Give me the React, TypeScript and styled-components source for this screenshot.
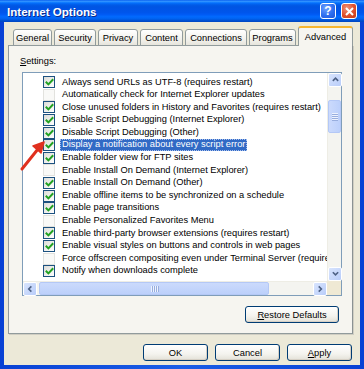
import React from "react";
import styled, { createGlobalStyle } from "styled-components";

const Global = createGlobalStyle`
  html, body { margin: 0; padding: 0; background: #ffffff; }
  body { font-family: "Liberation Sans", Arial, sans-serif; }
  * { box-sizing: border-box; }
`;

const Window = styled.div`
  position: relative;
  width: 364px;
  height: 369px;
  display: flex;
  flex-direction: column;
  background: linear-gradient(to right, #0841d4, #1a5ee6 50%, #0841d4);
  overflow: hidden;
`;

const TitleBar = styled.div`
  height: 22px;
  flex: none;
  display: flex;
  align-items: center;
  padding: 0 7px 0 7px;
  background: linear-gradient(
    to bottom,
    #0058ee 0%,
    #3593ff 5%,
    #288eff 8%,
    #127dff 11%,
    #036ffc 14%,
    #0262ee 19%,
    #0057e5 26%,
    #0054e3 32%,
    #0055eb 56%,
    #005bf5 66%,
    #026afe 76%,
    #0062ef 86%,
    #0052d6 92%,
    #0046c0 100%
  );
`;

const Title = styled.div`
  flex: 1;
  color: #ffffff;
  font-weight: bold;
  font-size: 11.6px;
  letter-spacing: 0;
  text-shadow: 1px 1px 0 #0a2a8a;
`;

const CapButton = styled.div<{ $kind: "help" | "close" }>`
  width: 16px;
  height: 16px;
  margin-left: 5px;
  border: 1px solid #ffffff;
  border-radius: 3px;
  display: flex;
  align-items: center;
  justify-content: center;
  color: #ffffff;
  font-weight: bold;
  font-size: 12px;
  background: ${(p) =>
    p.$kind === "close"
      ? "radial-gradient(circle at 35% 30%, #f0937a, #e0502c 55%, #c33a18)"
      : "radial-gradient(circle at 35% 30%, #6ea2ff, #2f6ff0 55%, #1d55d8)"};
`;

const Client = styled.div`
  flex: 1;
  margin: 0 4px 4px 4px;
  background: #ece9d8;
  padding: 4px 7px 4px 4px;
  display: flex;
  flex-direction: column;
`;

const TabStrip = styled.div`
  height: 20px;
  display: flex;
  align-items: flex-end;
  gap: 2px;
  margin-left: 5px;
  margin-bottom: -1px;
  position: relative;
  z-index: 1;
`;

const Tab = styled.div<{ $w: number; $active?: boolean }>`
  width: ${(p) => p.$w}px;
  height: ${(p) => (p.$active ? 20 : 17)}px;
  display: flex;
  align-items: ${(p) => (p.$active ? "flex-start" : "center")};
  padding-top: ${(p) => (p.$active ? 4 : 0)}px;
  justify-content: center;
  font-size: 9.3px;
  color: #000000;
  white-space: nowrap;
  border: 1px solid #919b9c;
  border-bottom: ${(p) => (p.$active ? "none" : "1px solid #919b9c")};
  border-top: ${(p) => (p.$active ? "2px solid #f7b52f" : "1px solid #919b9c")};
  border-radius: 3px 3px 0 0;
  background: ${(p) =>
    p.$active ? "#f6f5f0" : "linear-gradient(to bottom, #ffffff, #f0efe9 70%, #e6e4dc)"};
  margin-right: ${(p) => (p.$active ? 0 : 0)}px;
`;

const Panel = styled.div`
  width: 345px;
  height: 289px;
  border: 1px solid #919b9c;
  border-right-color: #8a9293;
  background: #f6f5f0;
  padding: 9px 10px 0 13px;
  display: flex;
  flex-direction: column;
  box-shadow: 1px 1px 0 #d0cec3;
`;

const Label = styled.div`
  font-size: 9.3px;
  line-height: 12px;
  height: 12px;
  margin-left: -2px;
  color: #000;
`;

const U = styled.span`
  text-decoration: underline;
`;

const ListBox = styled.div`
  margin-top: 5px;
  width: 320px;
  height: 224px;
  border: 1px solid #7f9db9;
  background: #ffffff;
  display: grid;
  grid-template-columns: 304px 14px;
  grid-template-rows: 208px 14px;
`;

const Rows = styled.div`
  overflow: hidden;
  padding-top: 3px;
`;

const Row = styled.div`
  height: 12.6px;
  display: flex;
  align-items: center;
  padding-left: 20px;
  white-space: nowrap;
  font-size: 9.3px;
  color: #000;
`;

const Check = styled.div<{ $on: boolean }>`
  width: 12px;
  height: 12px;
  flex: none;
  margin-right: 5px;
  border: 1px solid ${(p) => (p.$on ? "#1c5180" : "#e2e2de")};
  background: ${(p) =>
    p.$on ? "linear-gradient(135deg, #dcdcd7, #ffffff)" : "#f9f9f7"};
  display: flex;
  align-items: center;
  justify-content: center;
`;

const RowText = styled.span<{ $sel?: boolean }>`
  padding: 0 2px;
  line-height: 11.6px;
  background: ${(p) => (p.$sel ? "#316ac5" : "transparent")};
  color: ${(p) => (p.$sel ? "#ffffff" : "#000000")};
  outline: ${(p) => (p.$sel ? "1px dotted #a8c0ee" : "none")};
  outline-offset: -1px;
`;

const VScroll = styled.div`
  background: #f4f4f0;
  display: flex;
  flex-direction: column;
  border-left: 1px solid #eeede5;
`;

const HScroll = styled.div`
  background: #f4f4f0;
  display: flex;
  align-items: stretch;
  border-top: 1px solid #eeede5;
`;

const Corner = styled.div`
  background: #efe9d4;
`;

const ScrollBtn = styled.div`
  width: 14px;
  height: 14px;
  flex: none;
  border: 1px solid #ffffff;
  border-radius: 2px;
  background: linear-gradient(135deg, #d8e4fd, #b9cdfa);
  display: flex;
  align-items: center;
  justify-content: center;
`;

const Track = styled.div<{ $dir: "v" | "h" }>`
  flex: 1;
  display: flex;
  flex-direction: ${(p) => (p.$dir === "v" ? "column" : "row")};
  padding: ${(p) => (p.$dir === "v" ? "13px 0 0 0" : "0 0 0 2px")};
`;

const Thumb = styled.div<{ $dir: "v" | "h"; $len: number }>`
  ${(p) => (p.$dir === "v" ? `height: ${p.$len}px;` : `width: ${p.$len}px;`)}
  flex: none;
  border: 1px solid #b4c8f6;
  border-radius: 2px;
  background: ${(p) =>
    p.$dir === "v"
      ? "linear-gradient(to right, #cbdafc, #bcd0fb)"
      : "linear-gradient(to bottom, #cbdafc, #bcd0fb)"};
  display: flex;
  flex-direction: ${(p) => (p.$dir === "v" ? "column" : "row")};
  align-items: center;
  justify-content: center;
  gap: 1px;
`;

const Grip = styled.div<{ $dir: "v" | "h" }>`
  ${(p) => (p.$dir === "v" ? "width: 6px; height: 1px;" : "width: 1px; height: 6px;")}
  background: #eef3fe;
  box-shadow: ${(p) => (p.$dir === "v" ? "0 1px 0 #98aede" : "1px 0 0 #98aede")};
`;

const RestoreRow = styled.div`
  display: flex;
  justify-content: flex-end;
  margin-top: 10px;
  padding-right: 3px;
`;

const Button = styled.div<{ $w: number }>`
  width: ${(p) => p.$w}px;
  height: 17px;
  border: 1px solid #003c74;
  border-radius: 3px;
  background: linear-gradient(to bottom, #ffffff, #f4f3ee 60%, #e3e1d8);
  box-shadow: inset -1px -1px 0 #d6d0c5;
  display: flex;
  align-items: center;
  justify-content: center;
  font-size: 9.3px;
  color: #000;
`;

const ButtonRow = styled.div`
  display: flex;
  justify-content: flex-end;
  gap: 7px;
  margin-top: 10px;
  padding-right: 1px;
`;

const ArrowOverlay = styled.svg`
  position: absolute;
  left: 0;
  top: 0;
  pointer-events: none;
`;

const Chevron = ({ d }: { d: "up" | "down" | "left" | "right" }) => {
  const paths: Record<string, string> = {
    up: "M1.5 5.5 L4.5 2.5 L7.5 5.5",
    down: "M1.5 2.5 L4.5 5.5 L7.5 2.5",
    left: "M5.5 1.5 L2.5 4.5 L5.5 7.5",
    right: "M2.5 1.5 L5.5 4.5 L2.5 7.5",
  };
  return (
    <svg width="9" height="8" viewBox="0 0 9 9">
      <path d={paths[d]} fill="none" stroke="#4d6185" strokeWidth="1.8" />
    </svg>
  );
};

const CheckMark = () => (
  <svg width="9" height="8" viewBox="0 0 9 8">
    <path d="M0.8 3.8 L3.4 6.4 L8.2 1.2" fill="none" stroke="#21a121" strokeWidth="2" />
  </svg>
);

const tabs: { label: string; w: number; active?: boolean }[] = [
  { label: "General", w: 39 },
  { label: "Security", w: 42 },
  { label: "Privacy", w: 40 },
  { label: "Content", w: 43 },
  { label: "Connections", w: 62 },
  { label: "Programs", w: 47 },
  { label: "Advanced", w: 55, active: true },
];

const items: { text: string; on: boolean; sel?: boolean }[] = [
  { text: "Always send URLs as UTF-8 (requires restart)", on: true },
  { text: "Automatically check for Internet Explorer updates", on: false },
  { text: "Close unused folders in History and Favorites (requires restart)", on: true },
  { text: "Disable Script Debugging (Internet Explorer)", on: true },
  { text: "Disable Script Debugging (Other)", on: true },
  { text: "Display a notification about every script error", on: true, sel: true },
  { text: "Enable folder view for FTP sites", on: true },
  { text: "Enable Install On Demand (Internet Explorer)", on: false },
  { text: "Enable Install On Demand (Other)", on: true },
  { text: "Enable offline items to be synchronized on a schedule", on: true },
  { text: "Enable page transitions", on: true },
  { text: "Enable Personalized Favorites Menu", on: false },
  { text: "Enable third-party browser extensions (requires restart)", on: true },
  { text: "Enable visual styles on buttons and controls in web pages", on: true },
  { text: "Force offscreen compositing even under Terminal Server (requires restart)", on: false },
  { text: "Notify when downloads complete", on: true },
];

export default function App() {
  return (
    <>
      <Global />
      <Window>
        <TitleBar>
          <Title>Internet Options</Title>
          <CapButton $kind="help">?</CapButton>
          <CapButton $kind="close">
            <svg width="9" height="9" viewBox="0 0 9 9">
              <path d="M1 1 L8 8 M8 1 L1 8" stroke="#fff" strokeWidth="2" />
            </svg>
          </CapButton>
        </TitleBar>
        <Client>
          <TabStrip>
            {tabs.map((t) => (
              <Tab key={t.label} $w={t.w} $active={t.active}>
                {t.label}
              </Tab>
            ))}
          </TabStrip>
          <Panel>
            <Label>
              <U>S</U>ettings:
            </Label>
            <ListBox>
              <Rows>
                {items.map((it) => (
                  <Row key={it.text}>
                    <Check $on={it.on}>{it.on && <CheckMark />}</Check>
                    <RowText $sel={it.sel}>{it.text}</RowText>
                  </Row>
                ))}
              </Rows>
              <VScroll>
                <ScrollBtn>
                  <Chevron d="up" />
                </ScrollBtn>
                <Track $dir="v">
                  <Thumb $dir="v" $len={33}>
                    <Grip $dir="v" />
                    <Grip $dir="v" />
                    <Grip $dir="v" />
                    <Grip $dir="v" />
                  </Thumb>
                </Track>
                <ScrollBtn>
                  <Chevron d="down" />
                </ScrollBtn>
              </VScroll>
              <HScroll>
                <ScrollBtn>
                  <Chevron d="left" />
                </ScrollBtn>
                <Track $dir="h">
                  <Thumb $dir="h" $len={230}>
                    <Grip $dir="h" />
                    <Grip $dir="h" />
                    <Grip $dir="h" />
                    <Grip $dir="h" />
                  </Thumb>
                </Track>
                <ScrollBtn>
                  <Chevron d="right" />
                </ScrollBtn>
              </HScroll>
              <Corner />
            </ListBox>
            <RestoreRow>
              <Button $w={94}>
                <span>
                  <U>R</U>estore Defaults
                </span>
              </Button>
            </RestoreRow>
          </Panel>
          <ButtonRow>
            <Button $w={65}>OK</Button>
            <Button $w={65}>Cancel</Button>
            <Button $w={65}>
              <span>
                <U>A</U>pply
              </span>
            </Button>
          </ButtonRow>
        </Client>
        <ArrowOverlay width="364" height="369" viewBox="0 0 364 369">
          <path d="M22 169 L38 149" stroke="#e0301e" strokeWidth="3" strokeLinecap="round" />
          <path d="M44 142 L33 146 L41 153 Z" fill="#e0301e" stroke="#e0301e" strokeWidth="1.5" strokeLinejoin="round" />
        </ArrowOverlay>
      </Window>
    </>
  );
}
